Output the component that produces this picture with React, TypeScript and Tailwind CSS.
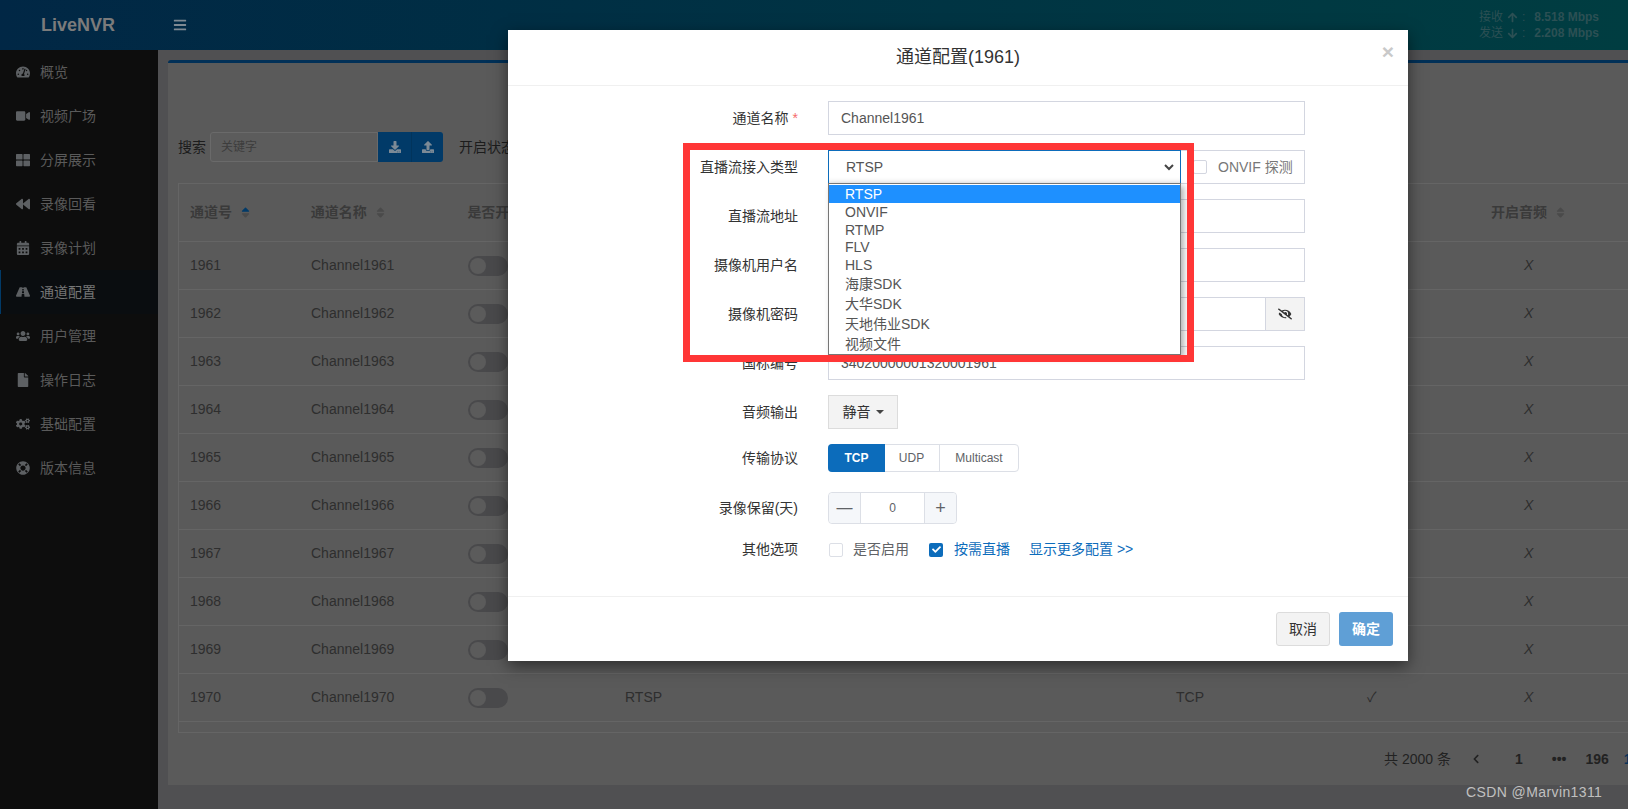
import React from "react";
import {
  FaTachometerAlt, FaVideo, FaThLarge, FaBackward, FaCalendarAlt, FaRoad, FaUsers, FaFile, FaCogs, FaLifeRing,
  FaBars, FaDownload, FaUpload, FaEyeSlash, FaArrowUp, FaArrowDown, FaSortUp, FaSortDown, FaChevronLeft, FaCheck,
} from "react-icons/fa";

const font = "font-['Liberation_Sans','Noto_Sans_CJK_SC',sans-serif]";

const nav = [
  { t: "概览", I: FaTachometerAlt },
  { t: "视频广场", I: FaVideo },
  { t: "分屏展示", I: FaThLarge },
  { t: "录像回看", I: FaBackward },
  { t: "录像计划", I: FaCalendarAlt },
  { t: "通道配置", I: FaRoad, active: true },
  { t: "用户管理", I: FaUsers },
  { t: "操作日志", I: FaFile },
  { t: "基础配置", I: FaCogs },
  { t: "版本信息", I: FaLifeRing },
];

const rows = Array.from({ length: 10 }, (_, i) => 1961 + i);

function Sort({ active }: { active?: boolean }) {
  return (
    <span className="relative ml-[7px] inline-block h-[14px] w-[10px] text-[#4a4a4a]">
      <FaSortUp className={`absolute left-0 top-0 text-[13px] ${active ? "text-[#013a68]" : ""}`} />
      <FaSortDown className="absolute left-0 top-0 text-[13px]" />
    </span>
  );
}

function Row({ label, star, children, className = "" }: { label: string; star?: boolean; children: React.ReactNode; className?: string }) {
  return (
    <div className={`flex items-center ${className}`}>
      <div className="w-[290px] pr-0 text-right text-[14px] text-[#333]">
        {label}
        {star && <span className="ml-[4px] text-[#f56c6c]">*</span>}
      </div>
      <div className="ml-[30px] w-[477px]">{children}</div>
    </div>
  );
}

const inputCls = "flex h-[34px] items-center border border-[#d3d6e0] bg-white px-[12px] text-[14px] text-[#555]";

export default function App() {
  return (
    <div className={`${font} relative flex h-[809px] w-[1628px] flex-col overflow-hidden bg-[#505052]`}>
      {/* top bar */}
      <header className="flex h-[50px] shrink-0 items-center bg-gradient-to-r from-[#012745] to-[#003d41]">
        <div className="w-[158px] pl-[41px] text-[18px] font-bold text-[#7b7b7b]">LiveNVR</div>
        <FaBars className="ml-[15px] text-[14px] text-[#7f8a93]" />
        <div className="ml-auto mr-[29px] flex flex-col text-[12px] leading-[16px] text-[#2c5054]">
          <div className="flex items-center">接收<FaArrowUp className="mx-[4px] text-[11px]" />:<span className="ml-[9px] font-bold">8.518 Mbps</span></div>
          <div className="flex items-center">发送<FaArrowDown className="mx-[4px] text-[11px]" />:<span className="ml-[9px] font-bold">2.208 Mbps</span></div>
        </div>
      </header>

      <div className="flex min-h-0 flex-1">
        {/* sidebar */}
        <aside className="w-[158px] shrink-0 bg-[#0d0d0d]">
          {nav.map(({ t, I, active }) => (
            <div
              key={t}
              className={`flex h-[44px] items-center text-[14px] ${active ? "border-l border-[#013a68] bg-[#0a0d10] pl-[15px] text-[#767676]" : "pl-[16px] text-[#5a5a5a]"}`}
            >
              <span className="flex w-[24px] text-[14px] text-[#5d6063]"><I /></span>
              {t}
            </div>
          ))}
        </aside>

        {/* main */}
        <main className="min-w-0 flex-1 pl-[10px] pt-[10px]">
          <section className="h-[725px] w-[1500px] rounded-t-[3px] border-t-[3px] border-[#013057] bg-[#5a5a5a] pl-[10px]">
            <div className="mt-[69px] flex h-[30px] items-center text-[14px] text-[#1c1c1c]">
              <span className="w-[32px]">搜索</span>
              <div className="flex h-[30px] w-[168px] items-center rounded-l-[3px] border border-[#6a6a6a] bg-[#5c5c5c] pl-[10px] text-[12px] text-[#3d3d3d]">关键字</div>
              <div className="flex h-[30px] w-[33px] items-center justify-center bg-[#013a68] text-[12px] text-[#7c8a96]"><FaDownload /></div>
              <div className="flex h-[30px] w-[32px] items-center justify-center rounded-r-[3px] border-l border-[#01345c] bg-[#013a68] text-[12px] text-[#7c8a96]"><FaUpload /></div>
              <span className="ml-[16px]">开启状态</span>
            </div>

            {/* table */}
            <div className="mt-[21px] h-[550px] border-b border-l border-t border-[#656565] text-[14px] text-[#2e2e2e]">
              <div className="flex h-[58px] items-center border-b border-[#656565] font-bold text-[#3a3a3a]">
                <div className="flex w-[121px] items-center pl-[11px]">通道号<Sort active /></div>
                <div className="flex w-[157px] items-center pl-[11px]">通道名称<Sort /></div>
                <div className="w-[157px] pl-[11px]">是否开启</div>
                <div className="w-[1055px] pl-[1043px]" />
                <div className="absolute left-[1491px] flex items-center">开启音频<Sort /></div>
              </div>
              {rows.map((n) => (
                <div key={n} className="flex h-[48px] items-center border-b border-[#656565]">
                  <div className="w-[121px] pl-[11px]">{n}</div>
                  <div className="w-[157px] pl-[11px]">Channel{n}</div>
                  <div className="w-[157px] pl-[11px]">
                    <div className="flex h-[20px] w-[40px] items-center rounded-full bg-[#49494b] pl-[2px]">
                      <div className="h-[16px] w-[16px] rounded-full bg-[#5b5b5b]" />
                    </div>
                  </div>
                  <div className="w-[551px] pl-[11px]">RTSP</div>
                  <div className="w-[198px] pl-[11px]">TCP</div>
                  <div className="w-[161px] pl-[4px]">✓</div>
                  <div className="w-[20px] font-['Liberation_Sans'] italic">X</div>
                </div>
              ))}
            </div>

            {/* pagination */}
            <div className="flex h-[52px] items-center text-[14px] text-[#222]">
              <span className="ml-[1206px]">共 2000 条</span>
              <FaChevronLeft className="ml-[20px] text-[10px]" />
              <b className="ml-[34px]">1</b>
              <b className="ml-[29px]">•••</b>
              <b className="ml-[19px]">196</b>
              <b className="ml-[15px] text-[#0a3358]">197</b>
            </div>
          </section>
        </main>
      </div>

      {/* modal */}
      <div className="absolute left-[508px] top-[30px] flex h-[631px] w-[900px] flex-col bg-white shadow-[0_5px_15px_rgba(0,0,0,0.5)]">
        <div className="relative flex h-[56px] shrink-0 items-center justify-center border-b border-[#f0f0f0] text-[18px] text-[#333]">
          通道配置(1961)
          <span className="absolute right-[14px] top-[10px] text-[21px] font-bold leading-[24px] text-[#c9c9c9]">×</span>
        </div>

        <div className="flex flex-1 flex-col pt-[15px]">
          <Row label="通道名称" star className="mb-[15px]">
            <div className={inputCls}>Channel1961</div>
          </Row>
          <Row label="直播流接入类型" className="mb-[15px]">
            <div className="relative flex h-[34px]">
              <div className="flex h-[34px] w-[353px] items-center justify-between border border-[#0c6cbb] bg-white pl-[17px] pr-[5px] text-[14px] text-[#555] shadow-[inset_0_-6px_6px_-6px_rgba(0,0,0,0.15)]">
                RTSP
                <svg width="12" height="12" viewBox="0 0 12 12" fill="none" stroke="#444" strokeWidth="2"><path d="M2 4l4 4 4-4" /></svg>
              </div>
              <div className="flex h-[34px] flex-1 items-center border border-l-0 border-[#d3d6e0] pl-[12px] text-[14px] text-[#777]">
                <span className="mr-[11px] h-[14px] w-[14px] rounded-[2px] border border-[#d3d6e0]" />
                ONVIF 探测
              </div>
              <div className="absolute left-0 top-[33px] z-20 h-[172px] w-[353px] border border-[#767676] bg-white text-[14px] text-[#555] shadow-[3px_3px_6px_rgba(0,0,0,0.3)]">
                <div className="mt-px h-[18px] bg-[#1e90ff] pl-[16px] leading-[18px] text-white">RTSP</div>
                <div className="h-[18px] pl-[16px] leading-[18px]">ONVIF</div>
                <div className="h-[18px] pl-[16px] leading-[18px]">RTMP</div>
                <div className="h-[17px] pl-[16px] leading-[17px]">FLV</div>
                <div className="h-[18px] pl-[16px] leading-[18px]">HLS</div>
                <div className="h-[20px] pl-[16px] leading-[20px]">海康SDK</div>
                <div className="h-[20px] pl-[16px] leading-[20px]">大华SDK</div>
                <div className="h-[20px] pl-[16px] leading-[20px]">天地伟业SDK</div>
                <div className="h-[20px] pl-[16px] leading-[20px]">视频文件</div>
              </div>
            </div>
          </Row>
          <Row label="直播流地址" className="mb-[15px]"><div className={inputCls} /></Row>
          <Row label="摄像机用户名" className="mb-[15px]"><div className={inputCls} /></Row>
          <Row label="摄像机密码" className="mb-[15px]">
            <div className="flex h-[34px] border border-[#d3d6e0]">
              <div className="flex-1" />
              <div className="flex w-[39px] items-center justify-center border-l border-[#d3d6e0] bg-[#f3f3f3] text-[14px] text-[#333]"><FaEyeSlash /></div>
            </div>
          </Row>
          <Row label="国标编号" className="mb-[15px]"><div className={inputCls}>34020000001320001961</div></Row>
          <Row label="音频输出" className="mb-[15px]">
            <div className="flex h-[34px] w-[70px] items-center justify-center border border-[#dcdcdc] bg-[#f3f3f3] text-[14px] text-[#333]">
              静音
              <span className="ml-[5px] h-0 w-0 border-x-[4px] border-t-[4px] border-x-transparent border-t-[#444]" />
            </div>
          </Row>
          <Row label="传输协议" className="mb-[20px]">
            <div className="flex h-[28px] w-[191px] items-stretch rounded-[4px] border border-[#dcdfe6] text-[12px] text-[#606266]">
              <div className="-m-px flex w-[57px] items-center justify-center rounded-l-[4px] bg-[#0c6cbb] font-bold text-white">TCP</div>
              <div className="flex w-[56px] items-center justify-center border-r border-[#dcdfe6]">UDP</div>
              <div className="flex flex-1 items-center justify-center">Multicast</div>
            </div>
          </Row>
          <Row label="录像保留(天)" className="mb-[15px]">
            <div className="flex h-[32px] w-[129px] items-stretch rounded-[4px] border border-[#dcdfe6] text-[14px] text-[#606266]">
              <div className="flex w-[32px] items-center justify-center rounded-l-[4px] border-r border-[#dcdfe6] bg-[#f5f7fa] text-[16px]">—</div>
              <div className="flex flex-1 items-center justify-center text-[12px]">0</div>
              <div className="flex w-[32px] items-center justify-center rounded-r-[4px] border-l border-[#dcdfe6] bg-[#f5f7fa] text-[18px] font-light">+</div>
            </div>
          </Row>
          <Row label="其他选项">
            <div className="flex items-center text-[14px]">
              <span className="ml-[1px] h-[14px] w-[14px] rounded-[2px] border border-[#dcdfe6]" />
              <span className="ml-[10px] text-[#606266]">是否启用</span>
              <span className="ml-[20px] flex h-[14px] w-[14px] items-center justify-center rounded-[2px] bg-[#0c6cbb] text-[9px] text-white"><FaCheck /></span>
              <span className="ml-[11px] text-[#0c6cbb]">按需直播</span>
              <span className="ml-[19px] text-[#0c6cbb]">显示更多配置 &gt;&gt;</span>
            </div>
          </Row>
        </div>

        <div className="flex h-[65px] shrink-0 items-center justify-end gap-[9px] border-t border-[#f0f0f0] pr-[15px]">
          <div className="flex h-[34px] w-[54px] items-center justify-center rounded-[3px] border border-[#dcdcdc] bg-[#f3f3f3] text-[14px] text-[#333]">取消</div>
          <div className="flex h-[34px] w-[54px] items-center justify-center rounded-[3px] bg-[#5f9fd6] text-[14px] font-bold text-white">确定</div>
        </div>

        {/* red annotation box */}
        <div className="pointer-events-none absolute left-[175px] top-[113px] z-30 h-[219px] w-[511px] border-[7px] border-[#ff3636]" />
      </div>

      {/* watermark */}
      <div className="absolute left-[1466px] top-[782px] text-[14px] tracking-[0.4px] text-[#c0c0c0]">CSDN @Marvin1311</div>
    </div>
  );
}
